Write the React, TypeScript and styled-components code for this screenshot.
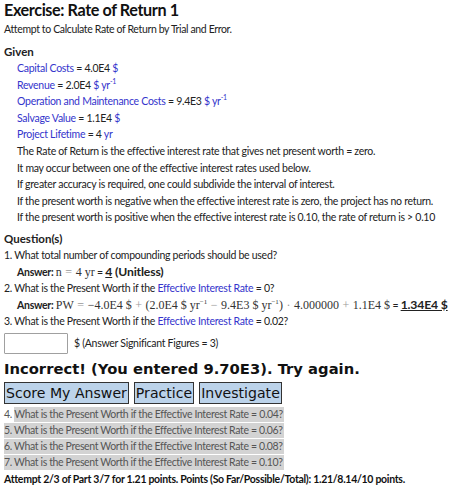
import styled, { createGlobalStyle } from 'styled-components';

const GlobalStyle = createGlobalStyle`
  body {
    margin: 0;
    background: #ffffff;
    font-family: Lato, "Open Sans", sans-serif;
    color: #222222;
  }
`;

const Page = styled.div`
  padding: 0 4px;
  width: 474px;
  box-sizing: border-box;
`;

const Title = styled.h1`
  margin: 0;
  font-size: 16.2px;
  letter-spacing: -0.4px;
  line-height: 20px;
  font-weight: 700;
  color: #111;
`;

const Subtitle = styled.div`
  font-size: 10.5px;
  letter-spacing: -0.36px;
  line-height: 17px;
  margin-top: 1px;
`;

const Heading = styled.div`
  font-size: 11.5px;
  font-weight: 700;
  line-height: 17px;
  margin-top: ${(p: { $top?: number }) => p.$top ?? 5}px;
`;

const Indented = styled.div`
  padding-left: 13px;
`;

const Line = styled.div`
  font-size: 10.5px;
  letter-spacing: -0.28px;
  line-height: 16.6px;
  white-space: nowrap;
`;

const Link = styled.span`
  color: #3434cc;
`;

const Sup = styled.sup`
  font-size: 7px;
  line-height: 0;
  vertical-align: 5px;
`;

const Bold = styled.span`
  font-weight: 700;
`;

const Result = styled.span`
  font-weight: 700;
  font-size: 12.2px;
  letter-spacing: -0.15px;
`;

const Under = styled.span`
  text-decoration: underline;
`;

const Math = styled.span`
  font-family: "Liberation Serif", "DejaVu Serif", serif;
  font-size: 12px;
  letter-spacing: 0;
  color: #333;
`;

const Op = styled.span`
  color: #999;
  margin: 0 3.5px;
`;

const AnswerRow = styled.div`
  display: flex;
  align-items: center;
  gap: 6px;
  margin-top: 3px;
  font-size: 10.5px;
  letter-spacing: -0.28px;
`;

const Input = styled.input`
  width: 64px;
  height: 21px;
  box-sizing: border-box;
  border: 1px solid #a0a0a0;
  border-radius: 1px;
  margin: 0;
`;

const Incorrect = styled.div`
  font-family: "DejaVu Sans", Verdana, sans-serif;
  font-weight: 700;
  font-size: 14.75px;
  line-height: 20px;
  margin-top: 5px;
  color: #111;
  white-space: nowrap;
`;

const ButtonRow = styled.div`
  display: flex;
  gap: 5px;
  margin-top: 3px;
`;

const Button = styled.button`
  font-family: "DejaVu Sans", Verdana, sans-serif;
  font-size: 14.1px;
  height: 22px;
  padding: 0 1px;
  background: #bcd3ea;
  border: 1px solid #333;
  border-radius: 0;
  color: #111;
  line-height: 20px;
`;

const Items = styled.div`
  margin-top: 3px;
  display: flex;
  flex-direction: column;
  gap: 1px;
`;

const Item = styled.div`
  font-size: 10.5px;
  letter-spacing: -0.36px;
  line-height: 15px;
  color: #555;
  white-space: nowrap;
`;

const Shade = styled.span`
  background: #d3d3d3;
  display: inline-block;
  padding-right: 1px;
`;

const Footer = styled.div`
  font-size: 10.5px;
  letter-spacing: -0.29px;
  font-weight: 700;
  line-height: 17px;
  margin-top: 1px;
  color: #111;
  white-space: nowrap;
`;

const questions = ['0.06', '0.08', '0.10'];

export default function App() {
  return (
    <Page>
      <GlobalStyle />
      <Title>Exercise: Rate of Return 1</Title>
      <Subtitle>Attempt to Calculate Rate of Return by Trial and Error.</Subtitle>
      <Heading>Given</Heading>
      <Indented>
        <Line><Link>Capital Costs</Link> = 4.0E4 <Link>$</Link></Line>
        <Line><Link>Revenue</Link> = 2.0E4 <Link>$ yr<Sup>-1</Sup></Link></Line>
        <Line><Link>Operation and Maintenance Costs</Link> = 9.4E3 <Link>$ yr<Sup>-1</Sup></Link></Line>
        <Line><Link>Salvage Value</Link> = 1.1E4 <Link>$</Link></Line>
        <Line><Link>Project Lifetime</Link> = 4 <Link>yr</Link></Line>
        <Line>The Rate of Return is the effective interest rate that gives net present worth = zero.</Line>
        <Line>It may occur between one of the effective interest rates used below.</Line>
        <Line>If greater accuracy is required, one could subdivide the interval of interest.</Line>
        <Line>If the present worth is negative when the effective interest rate is zero, the project has no return.</Line>
        <Line>If the present worth is positive when the effective interest rate is 0.10, the rate of return is &gt; 0.10</Line>
      </Indented>
      <Heading $top={4}>Question(s)</Heading>
      <Line>1. What total number of compounding periods should be used?</Line>
      <Indented>
        <Line>
          <Bold>Answer:</Bold> <Math>n<Op>=</Op>4 yr</Math> = <Result><Under>4</Under> (Unitless)</Result>
        </Line>
      </Indented>
      <Line>2. What is the Present Worth if the <Link>Effective Interest Rate</Link> = 0?</Line>
      <Indented>
        <Line>
          <Bold>Answer:</Bold>{' '}
          <Math>
            PW<Op>=</Op>−4.0E4 $<Op>+</Op>(2.0E4 $ yr<Sup>−1</Sup><Op>−</Op>9.4E3 $ yr<Sup>−1</Sup>)<Op>·</Op>4.000000<Op>+</Op>1.1E4 $
          </Math>{' '}
          = <Result><Under>1.34E4 $</Under></Result>
        </Line>
      </Indented>
      <Line>3. What is the Present Worth if the <Link>Effective Interest Rate</Link> = 0.02?</Line>
      <AnswerRow>
        <Input type="text" />
        <span>$ (Answer Significant Figures = 3)</span>
      </AnswerRow>
      <Incorrect>Incorrect! (You entered 9.70E3). Try again.</Incorrect>
      <ButtonRow>
        <Button>Score My Answer</Button>
        <Button>Practice</Button>
        <Button>Investigate</Button>
      </ButtonRow>
      <Items>
        <Item>4. <Shade>What is the Present Worth if the Effective Interest Rate = 0.04?</Shade></Item>
        {questions.map((q, i) => (
          <Item key={q}>
            <Shade>{i + 5}. What is the Present Worth if the Effective Interest Rate = {q}?</Shade>
          </Item>
        ))}
      </Items>
      <Footer>Attempt 2/3 of Part 3/7 for 1.21 points. Points (So Far/Possible/Total): 1.21/8.14/10 points.</Footer>
    </Page>
  );
}
